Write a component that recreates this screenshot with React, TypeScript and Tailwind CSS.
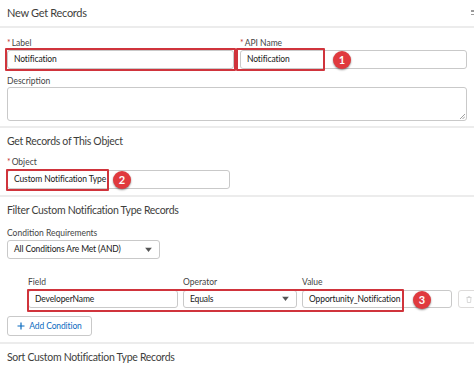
import React from "react";

const Badge = ({ n, className }: { n: string; className: string }) => (
  <div
    className={
      "absolute w-[18px] h-[18px] rounded-full bg-[#e03a3e] text-white text-[11px] font-bold flex items-center justify-center shadow-[0_1px_2px_rgba(0,0,0,0.45)] " +
      className
    }
  >
    {n}
  </div>
);

const Req = ({ children }: { children: React.ReactNode }) => (
  <div className="h-[8px] flex items-center text-[8.5px] text-[#444]">
    <span className="text-[#c23934] mr-[1px]">*</span>
    {children}
  </div>
);

const Lbl = ({ children }: { children: React.ReactNode }) => (
  <div className="h-[8px] flex items-center text-[8.5px] text-[#444]">{children}</div>
);

const Caret = () => (
  <svg width="7" height="5" viewBox="0 0 7 5" className="absolute right-[7px] top-1/2 -translate-y-1/2">
    <path d="M0 0 L7 0 L3.5 4.5 Z" fill="#555" />
  </svg>
);

const inputText = "text-[8.5px] tracking-[-0.12px]";
const titleText = "text-[10.5px] tracking-[-0.3px] text-[#3e3e3c]";

export default function App() {
  return (
    <div
      className="w-[474px] h-[374px] bg-white overflow-hidden relative text-[#181818]"
      style={{ fontFamily: 'Lato, "Open Sans", sans-serif' }}
    >
      {/* header */}
      <div className={"h-[26px] flex items-center px-[7px] relative text-[11px] tracking-[-0.3px] text-[#3e3e3c]"}>
        New Get Records
        <div className="absolute right-0 top-[10px] flex flex-col gap-[2px]">
          <div className="w-[3px] h-[1.5px] bg-[#9a9a9a]" />
          <div className="w-[3px] h-[1.5px] bg-[#9a9a9a]" />
        </div>
      </div>
      <div className="h-[2px] bg-[#ececec]" />

      <div className="px-[7px] pt-[11px]">
        <div className="flex gap-[6px]">
          <div className="w-[228px]">
            <Req>Label</Req>
            <div className="relative mt-[3px]">
              <div className={"h-[19px] border border-[#c9c9c9] rounded-[3px] flex items-center px-[6px] " + inputText}>
                Notification
              </div>
              <div className="absolute -left-[2px] -right-[2px] -top-[2px] -bottom-[2px] border-2 border-[#d0343c] rounded-[1px]" />
            </div>
          </div>
          <div className="w-[228px]">
            <Req>API Name</Req>
            <div className="relative mt-[3px]">
              <div className={"h-[19px] border border-[#c9c9c9] rounded-[3px] flex items-center px-[6px] " + inputText}>
                Notification
              </div>
              <div className="absolute -left-[4px] w-[89px] -top-[2px] -bottom-[2px] border-2 border-[#d0343c] rounded-[1px]" />
              <Badge n="1" className="left-[93px] top-[1px]" />
            </div>
          </div>
        </div>

        <div className="mt-[8px]">
          <Lbl>Description</Lbl>
          <div className="relative mt-[2px] h-[34px] border border-[#c9c9c9] rounded-[3px]">
            <svg width="5" height="5" viewBox="0 0 5 5" className="absolute right-[1px] bottom-[1px]">
              <path d="M5 0 L0 5 M5 2.5 L2.5 5" stroke="#888" strokeWidth="0.8" />
            </svg>
          </div>
        </div>
      </div>

      <div className="h-[2px] bg-[#ececec] mt-[5px]" />

      <div className="px-[7px]">
        <div className={"h-[28px] flex items-center " + titleText}>Get Records of This Object</div>
        <div className="mt-[2px]">
          <Req>Object</Req>
          <div className="relative mt-[4px] w-[223px]">
            <div className={"h-[19px] border border-[#c9c9c9] rounded-[3px] flex items-center px-[6px] " + inputText}>
              Custom Notification Type
            </div>
            <div className="absolute -left-[1px] w-[103px] -top-[1px] -bottom-[2px] border-2 border-[#d0343c] rounded-[1px]" />
            <Badge n="2" className="left-[106px] top-[1px]" />
          </div>
        </div>
      </div>

      <div className="h-[2px] bg-[#ececec] mt-[6px]" />

      <div className="px-[7px]">
        <div className={"h-[28px] flex items-center " + titleText}>
          Filter Custom Notification Type Records
        </div>
        <div className="mt-[4px]">
          <Lbl>Condition Requirements</Lbl>
          <div className={"relative mt-[3px] w-[153px] h-[19px] border border-[#c9c9c9] rounded-[3px] flex items-center px-[6px] " + inputText}>
            All Conditions Are Met (AND)
            <Caret />
          </div>
        </div>

        <div className="mt-[19px] pl-[21px] relative">
          <div className="flex">
            <div className="w-[150px] shrink-0">
              <Lbl>Field</Lbl>
              <div className={"mt-[4px] h-[18px] border border-[#c9c9c9] rounded-[3px] flex items-center px-[6px] " + inputText}>
                DeveloperName
              </div>
            </div>
            <div className="w-[114px] shrink-0 ml-[5px]">
              <Lbl>Operator</Lbl>
              <div className={"relative mt-[4px] h-[18px] border border-[#c9c9c9] rounded-[3px] flex items-center px-[6px] " + inputText}>
                Equals
                <Caret />
              </div>
            </div>
            <div className="w-[150px] shrink-0 ml-[5px]">
              <Lbl>Value</Lbl>
              <div className={"mt-[4px] h-[18px] border border-[#c9c9c9] rounded-[3px] flex items-center px-[6px] " + inputText}>
                Opportunity_Notification
              </div>
            </div>
            <div className="w-[22px] shrink-0 ml-[6px]">
              <div className="h-[8px]" />
              <div className="mt-[4px] h-[18px] border border-[#dddbda] rounded-[3px] flex items-center justify-center">
                <svg width="6" height="7" viewBox="0 0 6 7">
                  <path d="M0.5 1.5 H5.5 M2 1.5 V0.7 H4 V1.5 M1 1.5 L1.4 6.5 H4.6 L5 1.5" fill="none" stroke="#c9c9c9" strokeWidth="0.7" />
                </svg>
              </div>
            </div>
          </div>
          <div className="absolute left-[20px] w-[377px] top-[11px] h-[23px] border-2 border-[#d0343c] rounded-[1px]" />
          <Badge n="3" className="left-[406px] top-[13px]" />
        </div>

        <div className={"mt-[8px] w-[85px] h-[20px] border border-[#c9c9c9] rounded-[3px] flex items-center justify-center gap-[4px] text-[#0b6bbf] " + inputText}>
          <svg width="8" height="8" viewBox="0 0 8 8">
            <path d="M4 0.5 V7.5 M0.5 4 H7.5" stroke="#0b6bbf" strokeWidth="1.2" />
          </svg>
          Add Condition
        </div>
      </div>

      <div className="h-[2px] bg-[#ececec] mt-[6px]" />
      <div className={"px-[7px] h-[28px] flex items-center " + titleText}>
        Sort Custom Notification Type Records
      </div>
    </div>
  );
}
